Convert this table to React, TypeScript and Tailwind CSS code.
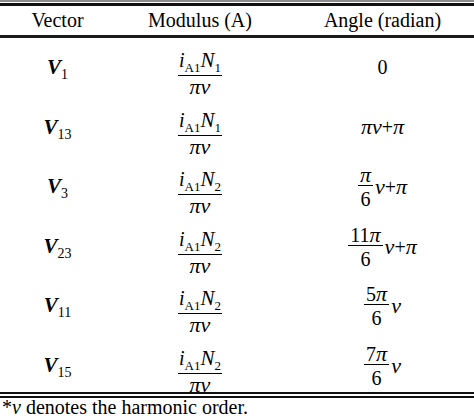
import React from "react";

const Sub = ({ children, size = "text-[14px]" }: { children: React.ReactNode; size?: string }) => (
  <span className={`relative top-[5px] ${size} not-italic font-normal`}>{children}</span>
);

const G = ({ children }: { children: React.ReactNode }) => (
  <i className="text-[22px]">{children}</i>
);

const Vec = ({ n }: { n: string }) => (
  <div className="pt-[19px] leading-[20px] whitespace-nowrap">
    <b className="italic font-bold text-[21px]">V</b>
    <Sub>{n}</Sub>
  </div>
);

const Mod = ({ n }: { n: string }) => (
  <div className="pt-[11px] flex flex-col items-center">
    <div className="leading-[22px] whitespace-nowrap px-[1px]">
      <i>i</i>
      <Sub size="text-[13px]">A1</Sub>
      <i className="text-[21px]">N</i>
      <Sub size="text-[13px]">{n}</Sub>
    </div>
    <div className="h-[1px] w-full bg-black mt-[1px]" />
    <div className="leading-[15px] pt-[3px]">
      <G>πν</G>
    </div>
  </div>
);

const Plain = ({ children }: { children: React.ReactNode }) => (
  <div className="pt-[19px] leading-[20px] whitespace-nowrap">{children}</div>
);

const AngFrac = ({ num, tail }: { num: React.ReactNode; tail: React.ReactNode }) => (
  <div className="flex items-start">
    <div className="pt-[8px] flex flex-col items-center">
      <div className="leading-[20px] whitespace-nowrap px-[2px]">{num}</div>
      <div className="h-[1px] w-full bg-black" />
      <div className="leading-[22px] pt-[2px]">6</div>
    </div>
    <div className="pt-[20px] pl-[2px] leading-[20px] whitespace-nowrap">{tail}</div>
  </div>
);

type Row = { v: string; n: string; ang: React.ReactNode; h: string };

const rows: Row[] = [
  { v: "1", n: "1", ang: <Plain>0</Plain>, h: "h-[59.6px]" },
  {
    v: "13",
    n: "1",
    ang: (
      <Plain>
        <G>πν</G>+<G>π</G>
      </Plain>
    ),
    h: "h-[59.6px]",
  },
  {
    v: "3",
    n: "2",
    ang: (
      <AngFrac
        num={<G>π</G>}
        tail={
          <>
            <G>ν</G>+<G>π</G>
          </>
        }
      />
    ),
    h: "h-[59.6px]",
  },
  {
    v: "23",
    n: "2",
    ang: (
      <AngFrac
        num={
          <>
            11<G>π</G>
          </>
        }
        tail={
          <>
            <G>ν</G>+<G>π</G>
          </>
        }
      />
    ),
    h: "h-[59.6px]",
  },
  {
    v: "11",
    n: "2",
    ang: (
      <AngFrac
        num={
          <>
            5<G>π</G>
          </>
        }
        tail={<G>ν</G>}
      />
    ),
    h: "h-[59.6px]",
  },
  {
    v: "15",
    n: "2",
    ang: (
      <AngFrac
        num={
          <>
            7<G>π</G>
          </>
        }
        tail={<G>ν</G>}
      />
    ),
    h: "h-[56px]",
  },
];

export default function App() {
  return (
    <div className="w-[474px] h-[418px] overflow-hidden bg-white text-black font-['Liberation_Serif',serif] text-[20px]">
      <div className="h-[2px] bg-[#8c8c8c]" />
      <div className="h-[1px]" />
      <div className="h-[3px] bg-[#111]" />
      <div className="grid grid-cols-[115px_170px_1fr] h-[29px] items-center leading-[23px]">
        <div className="text-center">Vector</div>
        <div className="text-center">Modulus (A)</div>
        <div className="text-center pl-[6px]">Angle (radian)</div>
      </div>
      <div className="h-[3px] bg-[#1a1a1a]" />
      {rows.map((r, i) => (
        <div key={i} className={`grid grid-cols-[115px_170px_1fr] ${r.h}`}>
          <div className="flex justify-center">
            <Vec n={r.v} />
          </div>
          <div className="flex justify-center">
            <Mod n={r.n} />
          </div>
          <div className="flex justify-center pl-[6px]">{r.ang}</div>
        </div>
      ))}
      <div className="h-[2px] bg-[#111]" />
      <div className="h-[2px]" />
      <div className="h-[2px] bg-[#111]" />
      <div className="leading-[19px] whitespace-nowrap pl-[2px]">
        *<i>ν</i> denotes the harmonic order.
      </div>
    </div>
  );
}
